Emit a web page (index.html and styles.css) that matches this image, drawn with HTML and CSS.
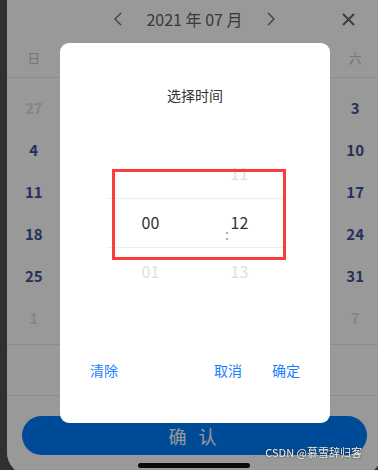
FILE: index.html
```html
<!DOCTYPE html>
<html lang="zh-CN">
  <head>
    <meta charset="UTF-8" />
    <meta name="viewport" content="width=device-width, initial-scale=1.0" />
    <title>选择时间</title>
    <link rel="stylesheet" href="styles.css">
  </head>
  <body>
    <div class="phone">
      <div class="calendar">
        <div class="cal-header">
          <span class="arrow">
            <svg width="8" height="14" viewBox="0 0 8 14"><path d="M7 1 L1 7 L7 13" fill="none" stroke="#6a6a6a" stroke-width="1.4" /></svg>
          </span>
          <span class="month">2021 年 07 月</span>
          <span class="arrow">
            <svg width="8" height="14" viewBox="0 0 8 14"><path d="M1 1 L7 7 L1 13" fill="none" stroke="#6a6a6a" stroke-width="1.4" /></svg>
          </span>
          <span class="close">
            <svg width="13" height="13" viewBox="0 0 13 13"><path d="M1 1 L12 12 M12 1 L1 12" fill="none" stroke="#666" stroke-width="2" /></svg>
          </span>
        </div>

        <div class="weekdays">
          <span>日</span><span>一</span><span>二</span><span>三</span><span>四</span><span>五</span><span>六</span>
        </div>

        <div class="days">
          <span class="other">27</span><span class="other">28</span><span class="other">29</span><span class="other">30</span><span>1</span><span>2</span><span>3</span>
          <span>4</span><span>5</span><span>6</span><span>7</span><span>8</span><span>9</span><span>10</span>
          <span>11</span><span>12</span><span>13</span><span>14</span><span>15</span><span>16</span><span>17</span>
          <span>18</span><span>19</span><span>20</span><span>21</span><span>22</span><span>23</span><span>24</span>
          <span>25</span><span>26</span><span>27</span><span>28</span><span>29</span><span>30</span><span>31</span>
          <span class="other">1</span><span class="other">2</span><span class="other">3</span><span class="other">4</span><span class="other">5</span><span class="other">6</span><span class="other">7</span>
        </div>

        <div class="time-row"></div>

        <button class="confirm">确 认</button>
      </div>

      <div class="home-bar"></div>
      <div class="mask"></div>

      <div class="picker-modal">
        <div class="picker-title">选择时间</div>
        <div class="picker">
          <div class="picker-col">
            <span></span>
            <span class="current">00</span>
            <span>01</span>
          </div>
          <div class="picker-col">
            <span>11</span>
            <span class="current">12</span>
            <span>13</span>
          </div>
          <span class="colon">:</span>
        </div>
        <div class="picker-footer">
          <span class="btn">清除</span>
          <div class="btn-group">
            <span class="btn">取消</span>
            <span class="btn">确定</span>
          </div>
        </div>
        <div class="mark"></div>
      </div>
    </div>
    <div class="watermark">CSDN @慕雪辞归客</div>
  </body>
</html>
```

FILE: styles.css
```css
html,
body {
  margin: 0;
  height: 100%;
  overflow: hidden;
}
body {
  background-color: #303030;
  font-family: "Noto Sans CJK SC", "Noto Sans", sans-serif;
}
.phone {
  position: relative;
  width: 375px;
  height: 476px;
  margin-left: 7px;
  background: white;
  border-radius: 0 0 24px 24px;
  overflow: hidden;
}
.cal-header {
  position: relative;
  height: 38px;
  display: flex;
  align-items: center;
  justify-content: center;
  gap: 24px;
}
.arrow {
  display: flex;
}
.month {
  font-size: 16px;
  color: #626262;
}
.close {
  position: absolute;
  right: 27px;
  top: 13px;
  display: flex;
}
.weekdays {
  height: 39px;
  display: grid;
  grid-template-columns: repeat(7, 1fr);
  align-items: center;
  text-align: center;
  font-size: 13px;
  color: #c4c4c4;
  border-bottom: 1px solid #e6e6e6;
}
.days {
  display: grid;
  grid-template-columns: repeat(7, 1fr);
  grid-auto-rows: 42px;
  padding-top: 8px;
  align-items: center;
  text-align: center;
  font-size: 15px;
  font-weight: bold;
  color: #3f5396;
}
.days .other {
  color: #e0e0e0;
}
.time-row {
  margin-top: 6px;
  height: 50px;
  border-top: 1px solid #e6e6e6;
  border-bottom: 1px solid #e6e6e6;
}
.confirm {
  display: block;
  width: 345px;
  height: 39px;
  margin: 20px 15px 0;
  border: none;
  border-radius: 999px;
  background-color: #017efc;
  color: white;
  font-family: inherit;
  font-size: 18px;
  letter-spacing: 4px;
}
.home-bar {
  position: absolute;
  left: 131px;
  bottom: 8px;
  width: 112px;
  height: 5px;
  border-radius: 3px;
  background: #111;
}
.mask {
  position: absolute;
  inset: 0;
  background: rgba(0, 0, 0, 0.4);
}
.picker-modal {
  position: absolute;
  left: 53px;
  top: 43px;
  width: 270px;
  height: 380px;
  background: white;
  border-radius: 9px;
  box-sizing: border-box;
  padding-top: 42px;
}
.picker-title {
  text-align: center;
  font-size: 14px;
  line-height: 20px;
  color: #333;
}
.picker {
  position: relative;
  width: 178px;
  margin: 44px auto 0;
  display: grid;
  grid-template-columns: 1fr 1fr;
}
.picker::before {
  content: "";
  position: absolute;
  left: 0;
  right: 0;
  top: 49px;
  height: 50px;
  box-sizing: border-box;
  border-top: 1px solid #eee;
  border-bottom: 1px solid #eee;
}
.picker-col {
  display: flex;
  flex-direction: column;
}
.picker-col span {
  height: 49px;
  line-height: 49px;
  text-align: center;
  font-size: 16px;
  color: #e0e0e0;
}
.picker-col .current {
  color: #333;
}
.colon {
  position: absolute;
  left: 119px;
  top: 78px;
  font-size: 14px;
  line-height: 14px;
  color: #999;
}
.picker-footer {
  display: flex;
  justify-content: space-between;
  padding: 0 30px;
  margin-top: 64px;
}
.btn-group {
  display: flex;
  gap: 30px;
}
.btn {
  font-size: 14px;
  line-height: 20px;
  color: #1a7dff;
}
.mark {
  position: absolute;
  left: 52px;
  top: 126px;
  width: 174px;
  height: 91px;
  box-sizing: border-box;
  border: 3px solid #fc3c3c;
}
.watermark {
  position: fixed;
  right: 16px;
  bottom: 10px;
  font-size: 11px;
  color: #eee;
  text-shadow: 0 0 2px #333;
}
```
